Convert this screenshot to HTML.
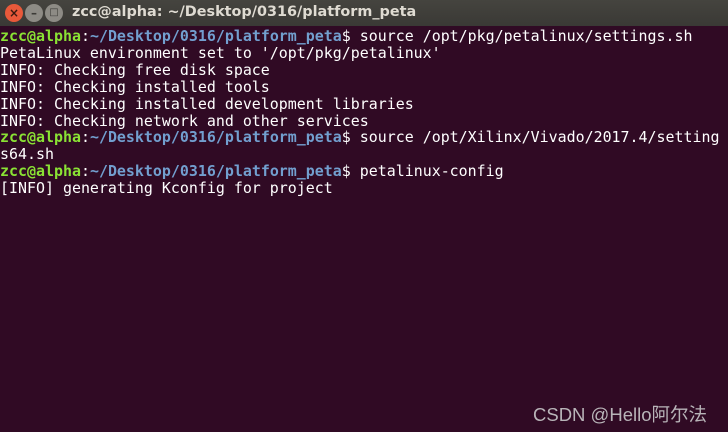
<!DOCTYPE html><html><head><style>
body{margin:0;width:728px;height:432px;background:#300a24;overflow:hidden;position:relative}
.t{height:26px;background:linear-gradient(#45443f,#3a3935);position:relative}
.b{position:absolute;top:4px;width:18px;height:18px;border-radius:50%;font:bold 12px "DejaVu Sans",sans-serif;text-align:center;line-height:18px}
.tt{position:absolute;left:72px;top:4px;color:#dfdbd2;font:bold 14.4px "DejaVu Sans","Liberation Sans",sans-serif}
pre{margin:0;position:absolute;left:0;top:28px;font:14.94px/16.9px "DejaVu Sans Mono",monospace;color:#fff}
.g{color:#8ae234;font-weight:bold}.u{color:#729fcf;font-weight:bold}
.w{position:absolute;left:533px;top:401px;color:#b8b4b8;font:18.5px "Liberation Sans","Noto Sans CJK SC",sans-serif}
</style></head><body>
<div class="t">
<div class="b" style="left:5px;background:#e9593a;color:#3a1a10">×</div>
<div class="b" style="left:25px;background:#8d8b85;color:#3c3b37">–</div>
<div class="b" style="left:45px;background:#8d8b85;color:#3c3b37;font-size:10px">□</div>
<div class="tt">zcc@alpha: ~/Desktop/0316/platform_peta</div></div>
<pre><span class="g">zcc@alpha</span>:<span class="u">~/Desktop/0316/platform_peta</span>$ source /opt/pkg/petalinux/settings.sh
PetaLinux environment set to '/opt/pkg/petalinux'
INFO: Checking free disk space
INFO: Checking installed tools
INFO: Checking installed development libraries
INFO: Checking network and other services
<span class="g">zcc@alpha</span>:<span class="u">~/Desktop/0316/platform_peta</span>$ source /opt/Xilinx/Vivado/2017.4/setting
s64.sh
<span class="g">zcc@alpha</span>:<span class="u">~/Desktop/0316/platform_peta</span>$ petalinux-config
[INFO] generating Kconfig for project</pre>
<div class="w">CSDN @Hello阿尔法</div>
</body></html>
